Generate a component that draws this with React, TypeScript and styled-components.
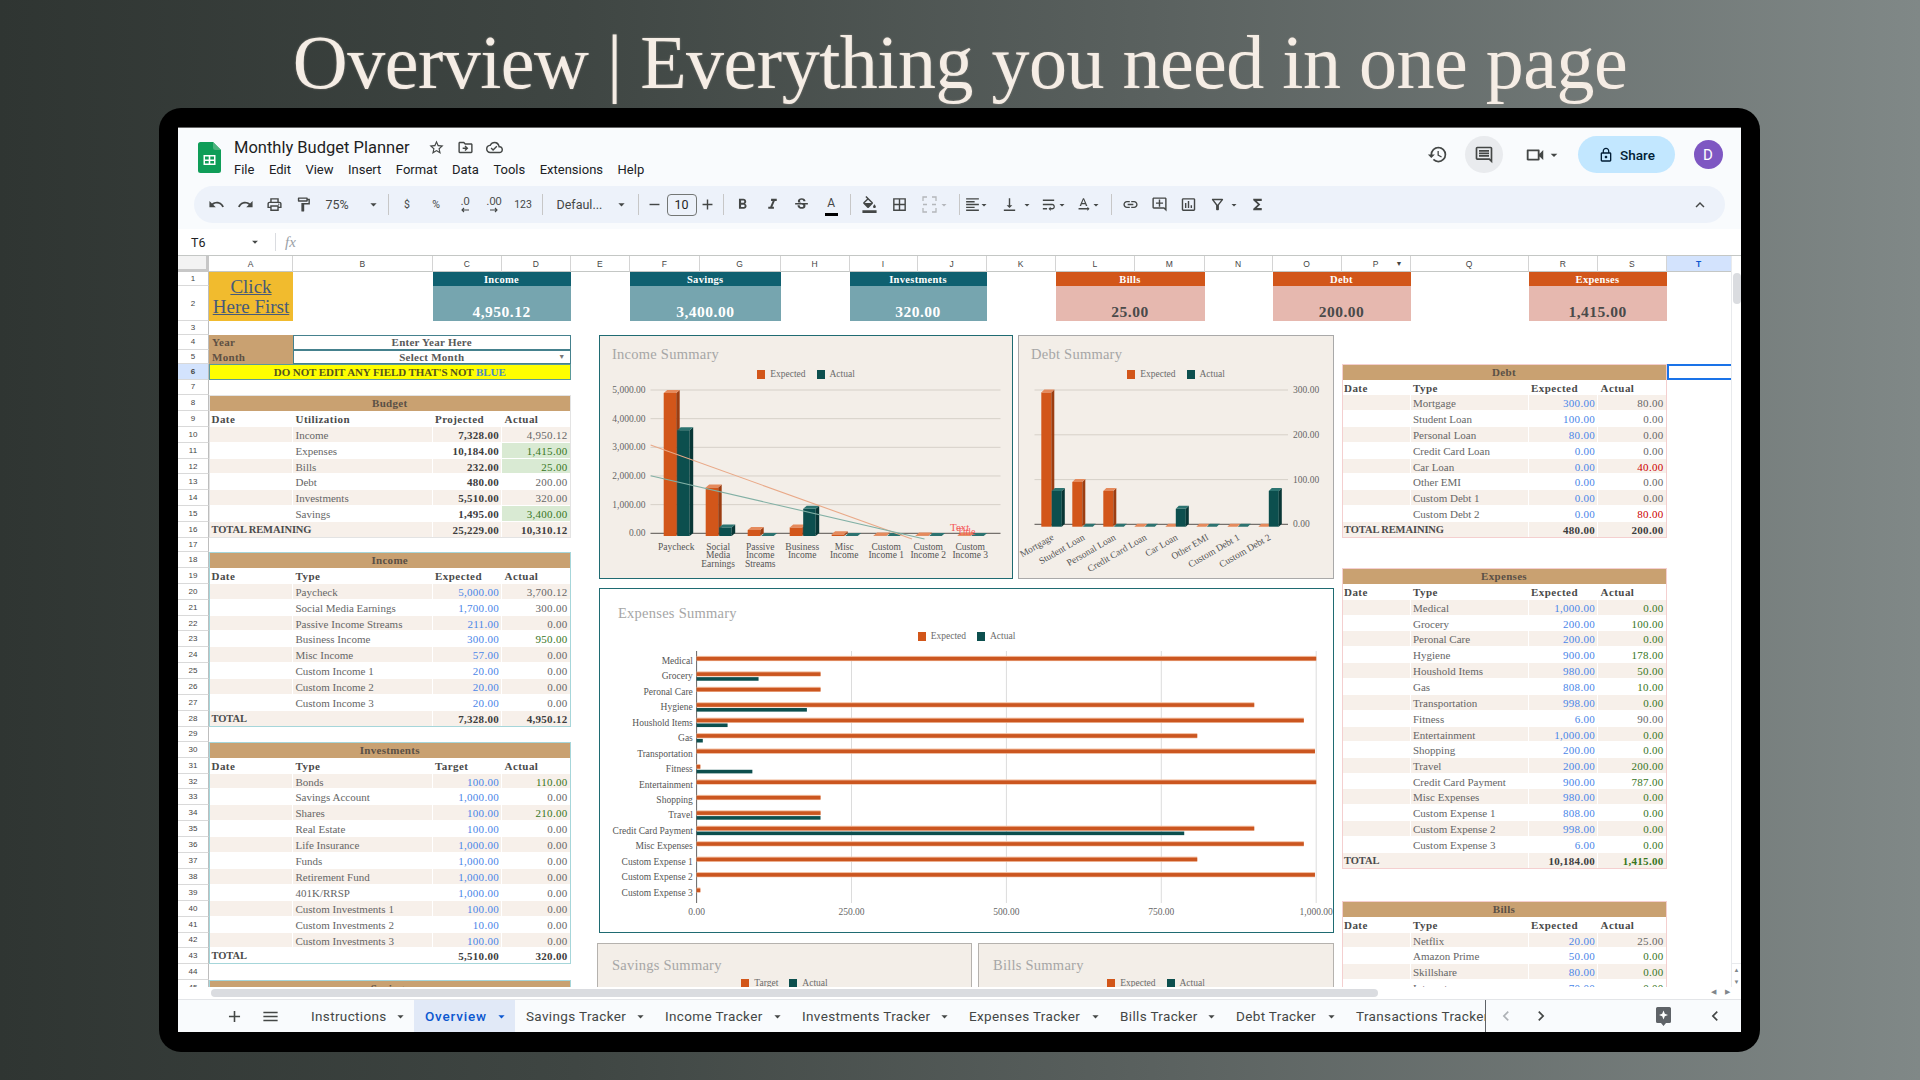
import React from "react";
import styled, { createGlobalStyle } from "styled-components";
import {
  MdUndo, MdRedo, MdOutlinePrint, MdOutlineFormatPaint, MdStarBorder, MdOutlineDriveFileMove,
  MdOutlineCloudDone, MdHistory, MdOutlineComment, MdOutlineVideocam, MdLockOutline, MdArrowDropDown,
  MdRemove, MdAdd, MdFormatBold, MdFormatItalic, MdStrikethroughS, MdFormatColorFill, MdBorderAll,
  MdFormatAlignLeft, MdVerticalAlignBottom, MdWrapText, MdTextRotationNone, MdLink, MdOutlineAddComment,
  MdInsertChartOutlined, MdOutlineFilterAlt, MdFunctions, MdExpandLess, MdMenu, MdChevronLeft, MdChevronRight,
} from "react-icons/md";

const SERIF = `"Liberation Serif", serif`;
const UI = `Roboto, "Liberation Sans", sans-serif`;
const ARIAL = `"Liberation Sans", sans-serif`;

const ORANGE = "#d2561a";
const TEAL = "#0c4f4e";

const colWidths = [84, 139.5, 69.5, 68.5, 59.5, 69.5, 81, 69, 68, 69, 69, 79.5, 69.5, 68, 69, 69, 118, 69.5, 68.5, 65];
const colNames = "ABCDEFGHIJKLMNOPQRST".split("");
const rowHeights = [
  14, 35, 14, 14.5, 14.5, 15.5, 15.5,
  ...Array(9).fill(15.9), 14,
  ...Array(11).fill(15.9), 15,
  ...Array(14).fill(15.9), 16,
  ...Array(3).fill(15.9),
];

const GlobalStyle = createGlobalStyle`
  html, body { margin: 0; padding: 0; }
  body { width: 1920px; height: 1080px; overflow: hidden; font-family: ${UI}; }
  * { box-sizing: border-box; }
`;

const Page = styled.div`
  width: 1920px;
  height: 1080px;
  display: flex;
  flex-direction: column;
  align-items: center;
  background: linear-gradient(90deg, #2f3532 0%, #3f4643 30%, #5a615f 60%, #808887 100%);
`;

const Headline = styled.h1`
  height: 108px;
  margin: 0;
  padding-top: 20px;
  font-family: ${SERIF};
  font-weight: 400;
  font-size: 76px;
  line-height: 84px;
  letter-spacing: -0.5px;
  color: #f5ede5;
  text-shadow: 0 0 2px #8d8983;
  white-space: nowrap;
`;

const Frame = styled.div`
  width: 1601px;
  height: 944px;
  margin-right: 1px;
  padding: 19px 19px 20px;
  background: #000;
  border-radius: 22px;
`;

const Screen = styled.div`
  width: 1563px;
  height: 905px;
  display: flex;
  flex-direction: column;
  background: #f9fbfd;
  overflow: hidden;
`;

const TopBar = styled.header`
  height: 59px;
  flex: none;
  display: flex;
  align-items: center;
  padding: 0 18.5px 0 20px;
  border-top: 1px solid #666;
`;

const TitleBlock = styled.div`
  margin-left: 13px;
  display: flex;
  flex-direction: column;
  gap: 3px;
  margin-top: -1px;
`;

const TitleRow = styled.div`
  display: flex;
  align-items: center;
  height: 22px;
`;

const DocTitle = styled.div`
  font-size: 16.5px;
  color: #1f1f1f;
  width: 174px;
  white-space: nowrap;
`;

const TitleIcons = styled.div`
  display: flex;
  margin-left: 14px;
`;

const TitleIcon = styled.span`
  width: 29px;
  display: flex;
  justify-content: center;
  color: #444746;
  font-size: 17px;
`;

const MenuRow = styled.nav`
  display: flex;
  gap: 14.5px;
  font-size: 13px;
  color: #202124;
`;

const TopActions = styled.div`
  margin-left: auto;
  margin-top: -5px;
  display: flex;
  align-items: center;
`;

const CommentPill = styled.div`
  width: 38px;
  height: 37px;
  margin-left: 17px;
  border-radius: 19px;
  background: #e9ebee;
  display: flex;
  align-items: center;
  justify-content: center;
  font-size: 20px;
  color: #444746;
`;

const VideoButton = styled.div`
  margin-left: 21.5px;
  display: flex;
  align-items: center;
  font-size: 22px;
  color: #444746;
`;

const ShareButton = styled.div`
  width: 97px;
  height: 37px;
  margin-left: 16px;
  border-radius: 19px;
  background: #c2e7ff;
  display: flex;
  align-items: center;
  justify-content: center;
  gap: 6px;
  font-size: 13.5px;
  font-weight: 500;
  color: #001d35;
`;

const Avatar = styled.div`
  width: 29px;
  height: 29px;
  margin-left: 18.5px;
  border-radius: 50%;
  background: #7e57c2;
  color: #fff;
  font-size: 15px;
  display: flex;
  align-items: center;
  justify-content: center;
`;

const Toolbar = styled.div`
  height: 37px;
  flex: none;
  margin: 0 16px 0 15.5px;
  padding: 0 16px 0 8px;
  border-radius: 19px;
  background: #edf2fa;
  display: flex;
  align-items: center;
  color: #444746;
`;

const ToolButton = styled.span<{ $w?: number; $muted?: boolean }>`
  width: ${(p) => p.$w ?? 29}px;
  height: 26px;
  flex: none;
  display: flex;
  align-items: center;
  justify-content: center;
  font-size: 17px;
  color: ${(p) => (p.$muted ? "#b4b7bb" : "#444746")};
  position: relative;
`;

const ToolCaret = styled.span`
  width: 12px;
  flex: none;
  margin-left: -4px;
  margin-right: 4.5px;
  display: flex;
  justify-content: center;
  font-size: 14px;
  color: #444746;
`;

const ToolSep = styled.span`
  width: 1px;
  height: 21px;
  flex: none;
  margin: 0 4px;
  background: #c7c7c7;
`;

const ToolSelect = styled.span<{ $w: number; $pad: number; $caretGap: number }>`
  width: ${(p) => p.$w}px;
  padding-left: ${(p) => p.$pad}px;
  flex: none;
  display: flex;
  align-items: center;
  justify-content: space-between;
  font-size: 12.5px;
  color: #444746;
  svg { font-size: 15px; margin-right: ${(p) => p.$caretGap}px; }
`;

const NumberText = styled.span`
  font-size: 10.5px;
  color: #444746;
`;

const SizeBox = styled.span`
  width: 30px;
  height: 22px;
  flex: none;
  border: 1px solid #747775;
  border-radius: 4px;
  font-size: 12.5px;
  display: flex;
  align-items: center;
  justify-content: center;
  color: #1f1f1f;
`;

const ColorBar = styled.span<{ $c: string }>`
  position: absolute;
  left: 8px;
  right: 8px;
  bottom: 2px;
  height: 3px;
  background: ${(p) => p.$c};
`;

const LetterA = styled.span`
  font-size: 12px;
  margin-bottom: 4px;
  color: #444746;
`;

const Collapse = styled.span`
  margin-left: auto;
  font-size: 18px;
  display: flex;
  color: #444746;
`;

const FormulaBar = styled.div`
  height: 33px;
  margin-top: 0;
  padding: 6px 0 0 13px;
  flex: none;
  display: flex;
  align-items: center;
  background: linear-gradient(#f9fbfd 6px, #fff 6px);
  border-bottom: 1px solid #c4c7c5;
  font-size: 12.5px;
  color: #202124;
`;

const CellName = styled.span`
  width: 71px;
  display: flex;
  justify-content: space-between;
  align-items: center;
  svg { font-size: 14px; color: #444746; }
`;

const FxSep = styled.span`
  width: 1px;
  height: 18px;
  margin: 0 9px 0 13px;
  background: #dadce0;
`;

const FxMark = styled.span`
  font-family: ${SERIF};
  font-style: italic;
  font-size: 15px;
  color: #9aa0a6;
`;

const SheetRow = styled.div`
  display: flex;
  flex: none;
  height: 731px;
  background: #fff;
`;

const Sheet = styled.div`
  position: relative;
  width: 1553px;
  height: 731px;
  overflow: hidden;
  display: grid;
  grid-template-columns: 31px ${colWidths.map((w) => `${w}px`).join(" ")};
  grid-template-rows: 16px ${rowHeights.map((h) => `${h}px`).join(" ")};
  background: #fff;
  font-family: ${SERIF};
  font-size: 11px;
  color: #666;
`;

const Corner = styled.div`
  grid-column: 1;
  grid-row: 1;
  background: #f3f3f3;
  border-right: 3px solid #c7c7c7;
  border-bottom: 3px solid #c7c7c7;
`;

const ColumnStrip = styled.div`
  grid-column: 2 / span 20;
  grid-row: 1;
  display: grid;
  grid-template-columns: subgrid;
`;

const ColumnHead = styled.div<{ $active?: boolean }>`
  position: relative;
  display: flex;
  align-items: center;
  justify-content: center;
  font-family: ${ARIAL};
  font-size: 8.5px;
  font-weight: ${(p) => (p.$active ? 700 : 400)};
  color: ${(p) => (p.$active ? "#0b57d0" : "#444")};
  background: ${(p) => (p.$active ? "#d3e3fd" : "#fff")};
  border-right: 1px solid #d4d4d4;
  border-bottom: 1px solid #c4c7c5;
`;

const FilterCaret = styled.span`
  position: absolute;
  right: 7px;
  font-size: 7px;
  color: #444;
`;

const RowStrip = styled.div`
  grid-column: 1;
  grid-row: 2 / span 49;
  display: grid;
  grid-template-rows: subgrid;
`;

const RowHead = styled.div<{ $active?: boolean }>`
  display: flex;
  align-items: center;
  justify-content: center;
  font-family: ${ARIAL};
  font-size: 8px;
  font-weight: ${(p) => (p.$active ? 700 : 400)};
  color: #444;
  background: ${(p) => (p.$active ? "#d3e3fd" : "#fff")};
  border-right: 1px solid #bdbdbd;
  border-bottom: 1px solid #d9d9d9;
`;

const ClickCell = styled.a`
  grid-column: 2;
  grid-row: 2 / span 2;
  background: #f1bb2e;
  color: #455a7a;
  font-size: 19px;
  line-height: 20px;
  text-align: center;
  text-decoration: underline;
  padding-top: 5px;
`;

const KpiCard = styled.div<{ $col: number; $tone: "teal" | "orange" }>`
  grid-column: ${(p) => p.$col} / span 2;
  grid-row: 2 / span 2;
  display: grid;
  grid-template-rows: 14px 35px;
  background: ${(p) => (p.$tone === "teal" ? "#76a5af" : "#e6b8af")};
  text-align: center;
  font-weight: 700;
`;

const KpiHead = styled.div<{ $tone: "teal" | "orange" }>`
  background: ${(p) => (p.$tone === "teal" ? "#0f6070" : ORANGE)};
  color: #fff;
  font-size: 10.5px;
  letter-spacing: 0.3px;
  line-height: 15px;
`;

const KpiValue = styled.div<{ $tone: "teal" | "orange" }>`
  color: ${(p) => (p.$tone === "teal" ? "#fff" : "#4a4a4a")};
  font-size: 15.5px;
  letter-spacing: 0.5px;
  align-self: end;
  line-height: 19px;
`;

const FieldLabel = styled.div<{ $row: number }>`
  grid-column: 2;
  grid-row: ${(p) => p.$row};
  background: #c9a171;
  color: #5d5043;
  font-weight: 700;
  letter-spacing: 0.3px;
  padding-left: 3px;
  line-height: 14px;
`;

const FieldValue = styled.div<{ $row: number }>`
  position: relative;
  grid-column: 3 / span 3;
  grid-row: ${(p) => p.$row};
  border: 1px solid #45818e;
  color: #595959;
  font-weight: 700;
  letter-spacing: 0.25px;
  text-align: center;
  line-height: 13px;
`;

const FieldCaret = styled.span`
  position: absolute;
  right: 4px;
  top: 0;
  font-size: 7px;
  color: #777;
`;

const Warning = styled.div`
  grid-column: 2 / span 4;
  grid-row: 7;
  background: #ffff00;
  border: 1px solid #5b9a9a;
  color: #55551f;
  font-weight: 700;
  letter-spacing: -0.1px;
  text-align: center;
  line-height: 14px;
`;

const WarningBlue = styled.span`
  color: #4a8bc0;
`;

const SelectedCell = styled.div`
  grid-column: 21;
  grid-row: 7;
  border: 2px solid #1a73e8;
  border-right: none;
`;

const TableBlock = styled.section<{ $col: number; $row: number; $rows: number; $edge: string }>`
  grid-column: ${(p) => p.$col} / span 4;
  grid-row: ${(p) => p.$row + 1} / span ${(p) => p.$rows};
  display: grid;
  grid-template-columns: subgrid;
  grid-template-rows: subgrid;
  outline: 1px solid ${(p) => p.$edge};
  outline-offset: -1px;
`;

const TableTitle = styled.div`
  grid-column: 1 / span 4;
  background: #c9a171;
  color: #5a5046;
  font-weight: 700;
  font-size: 11px;
  letter-spacing: 0.3px;
  text-align: center;
  line-height: 16.5px;
`;

const ColumnLabel = styled.div`
  color: #4a4a4a;
  font-weight: 700;
  letter-spacing: 0.45px;
  padding-left: 2.5px;
  line-height: 16.5px;
  white-space: nowrap;
`;

type Tone = "plain" | "strong" | "blue" | "green" | "red";
const toneColor: Record<Tone, string> = {
  plain: "#666666",
  strong: "#3d3d3d",
  blue: "#4a86e8",
  green: "#38761d",
  red: "#cc0000",
};

const Cell = styled.div<{ $striped?: boolean; $span?: number; $flag?: boolean }>`
  grid-column: span ${(p) => p.$span ?? 1};
  background: ${(p) => (p.$flag ? "#d9ead3" : p.$striped ? "#f7f0ea" : "transparent")};
  border-bottom: 1px solid #fff;
  border-right: 1px solid #fff;
  white-space: nowrap;
  line-height: 16px;
`;

const TextCell = styled(Cell)<{ $bold?: boolean }>`
  padding-left: 2.5px;
  font-size: ${(p) => (p.$bold ? 10.5 : 11)}px;
  letter-spacing: ${(p) => (p.$bold ? -0.1 : 0)}px;
  font-weight: ${(p) => (p.$bold ? 700 : 400)};
  color: ${(p) => (p.$bold ? "#4a4a4a" : "#666")};
`;

const NumCell = styled(Cell)<{ $tone: Tone; $bold?: boolean }>`
  padding-right: 2px;
  text-align: right;
  letter-spacing: 0.28px;
  font-weight: ${(p) => (p.$bold ? 700 : 400)};
  color: ${(p) => toneColor[p.$tone]};
`;

const ChartCard = styled.div<{ $x: number; $y: number; $w: number; $h: number; $edge: string; $fill: string }>`
  position: absolute;
  left: ${(p) => p.$x - 178}px;
  top: ${(p) => p.$y - 256}px;
  width: ${(p) => p.$w}px;
  height: ${(p) => p.$h}px;
  border: 1px solid ${(p) => p.$edge};
  background: ${(p) => p.$fill};
`;

const ChartTitle = styled.div<{ $left: number; $top: number }>`
  position: absolute;
  left: ${(p) => p.$left}px;
  top: ${(p) => p.$top}px;
  font-size: 14.5px;
  line-height: 18px;
  letter-spacing: 0.25px;
  color: #a6a6a6;
  white-space: nowrap;
`;

const Legend = styled.div<{ $top: number }>`
  position: absolute;
  left: 0;
  right: 0;
  top: ${(p) => p.$top}px;
  display: flex;
  justify-content: center;
  align-items: center;
  font-size: 9.5px;
  color: #6b6b6b;
  line-height: 10px;
`;

const LegendSwatch = styled.span<{ $c: string }>`
  width: 8px;
  height: 9px;
  margin-right: 5px;
  background: ${(p) => p.$c};
`;

const LegendLabel = styled.span`
  margin-right: 11px;
  &:last-child { margin-right: 0; }
`;

const ChartCanvas = styled.svg`
  position: absolute;
  left: -1px;
  top: -1px;
  overflow: visible;
`;

const AxisText = styled.text<{ $c?: string; $s?: number }>`
  font-family: ${SERIF};
  font-size: ${(p) => p.$s ?? 9.5}px;
  fill: ${(p) => p.$c ?? "#666"};
`;

const VerticalScroll = styled.div`
  width: 10px;
  height: 731px;
  position: relative;
  background: #fff;
  border-left: 1px solid #e8eaed;
`;

const VerticalThumb = styled.div`
  height: 31px;
  margin: 17px 0 0 1px;
  width: 8px;
  border-radius: 4px;
  background: #dadce0;
`;

const ScrollArrows = styled.div`
  position: absolute;
  bottom: 0;
  left: 0;
  right: 0;
  height: 24px;
  border-top: 1px solid #e8eaed;
  display: flex;
  flex-direction: column;
  align-items: center;
  justify-content: space-around;
  font-size: 6px;
  color: #80868b;
`;

const HorizontalScroll = styled.div`
  height: 12px;
  flex: none;
  padding: 2px 0 0 33px;
  display: flex;
  background: #fff;
  position: relative;
`;

const HorizontalThumb = styled.div`
  width: 1167px;
  height: 8px;
  border-radius: 4px;
  background: #dadce0;
`;

const ScrollEnds = styled.div`
  position: absolute;
  right: 11px;
  top: 1px;
  display: flex;
  gap: 9px;
  font-size: 7px;
  color: #80868b;
`;

const TabBar = styled.footer`
  height: 33px;
  flex: none;
  display: flex;
  align-items: center;
  border-top: 1px solid #e3e5e8;
  background: #f9fbfd;
  padding-left: 41px;
  color: #444746;
`;

const TabTool = styled.span`
  width: 30px;
  margin-right: 6px;
  display: flex;
  justify-content: center;
  font-size: 19px;
`;

const Tabs = styled.div`
  margin-left: 9px;
  width: 1186px;
  height: 100%;
  display: flex;
  overflow: hidden;
  border-right: 1px solid #5f6368;
`;

const Tab = styled.div<{ $active?: boolean; $w: number }>`
  flex: none;
  width: ${(p) => p.$w}px;
  padding: 0 6.5px 0 11px;
  display: flex;
  align-items: center;
  justify-content: space-between;
  font-size: 13.5px;
  letter-spacing: ${(p) => (p.$active ? 0.8 : 0.35)}px;
  font-weight: ${(p) => (p.$active ? 500 : 400)};
  color: ${(p) => (p.$active ? "#0b57d0" : "#444746")};
  background: ${(p) => (p.$active ? "#e1e9f7" : "transparent")};
  white-space: nowrap;
  svg { font-size: 15px; flex: none; }
`;

const TabNav = styled.span<{ $dim?: boolean; $gap: number }>`
  margin-left: ${(p) => p.$gap}px;
  display: flex;
  font-size: 20px;
  color: ${(p) => (p.$dim ? "#aeb2b6" : "#444746")};
`;

const SheetsLogo = () => (
  <svg width="23" height="31" viewBox="0 0 23 31">
    <path d="M2.5 0H15l8 8v20.5a2.5 2.5 0 0 1-2.5 2.5h-18A2.5 2.5 0 0 1 0 28.5v-26A2.5 2.5 0 0 1 2.5 0z" fill="#0f9d58" />
    <path d="M15 0l8 8h-5.5A2.5 2.5 0 0 1 15 5.500z" fill="#4db37e" />
    <path d="M5.500 13h12v10h-12z M7 14.500v3h3.700v-3z M12.300 14.500v3H16v-3z M7 19v2.500h3.700V19z M12.300 19v2.500H16V19z" fill="#fff" fillRule="evenodd" />
  </svg>
);

const MergeIcon = () => (
  <svg width="15" height="17" viewBox="0 0 15 17" fill="none" stroke="#b4b7bb" strokeWidth="1.3">
    <path d="M1 5V1h4M10 1h4v4M1 12v4h4M10 16h4v-4M1 8.500h4M14 8.500h-4" />
  </svg>
);

const ExploreIcon = () => (
  <svg width="15" height="19" viewBox="0 0 15 19">
    <path d="M1.500 0h12A1.500 1.500 0 0 1 15 1.500v13a1.500 1.500 0 0 1-1.500 1.500H10l-2.500 3L5 16H1.500A1.500 1.500 0 0 1 0 14.500v-13A1.500 1.500 0 0 1 1.500 0z" fill="#5f6368" />
    <path d="M7.500 3.500l1.300 3.200 3.200 1.300-3.200 1.300-1.300 3.200-1.300-3.200L3 8l3.200-1.300z" fill="#fff" />
  </svg>
);

const DecimalIcon = ({ label, flip }: { label: string; flip?: boolean }) => (
  <svg width="20" height="20" viewBox="0 0 20 20" fill="none" stroke="#444746" strokeWidth="1.1">
    <text x="10" y="10" textAnchor="middle" fontSize="11" fill="#444746" stroke="none" fontFamily={ARIAL}>{label}</text>
    {flip ? <path d="M6 15h7M11 13l2 2-2 2" /> : <path d="M14 15H7M9 13l-2 2 2 2" />}
  </svg>
);

type BarStyle = { front: string; side: string; top: string };
const orangeBar: BarStyle = { front: ORANGE, side: "#9c3d11", top: "#e58a5c" };
const tealBar: BarStyle = { front: TEAL, side: "#083635", top: "#2c7370" };

const Bar3D = ({ x, w, bottom, h, dx, dy, colors }: { x: number; w: number; bottom: number; h: number; dx: number; dy: number; colors: BarStyle }) => {
  const y = bottom - h;
  return (
    <g>
      <rect x={x} y={y} width={w} height={h} fill={colors.front} />
      <polygon points={`${x + w},${y} ${x + w + dx},${y - dy} ${x + w + dx},${bottom - dy} ${x + w},${bottom}`} fill={colors.side} />
      <polygon points={`${x},${y} ${x + dx},${y - dy} ${x + w + dx},${y - dy} ${x + w},${y}`} fill={colors.top} />
    </g>
  );
};

const ChartLegend = ({ top, first = "Expected" }: { top: number; first?: string }) => (
  <Legend $top={top}>
    <LegendSwatch $c={ORANGE} />
    <LegendLabel>{first}</LegendLabel>
    <LegendSwatch $c={TEAL} />
    <LegendLabel>Actual</LegendLabel>
  </Legend>
);

const incomeGroups: { lines: string[]; exp: number; act: number }[] = [
  { lines: ["Paycheck"], exp: 5000, act: 3700 },
  { lines: ["Social", "Media", "Earnings"], exp: 1700, act: 300 },
  { lines: ["Passive", "Income", "Streams"], exp: 211, act: 0 },
  { lines: ["Business", "Income"], exp: 300, act: 950 },
  { lines: ["Misc", "Income"], exp: 57, act: 0 },
  { lines: ["Custom", "Income 1"], exp: 20, act: 0 },
  { lines: ["Custom", "Income 2"], exp: 20, act: 0 },
  { lines: ["Custom", "Income 3"], exp: 20, act: 0 },
];

const IncomeChart = () => (
  <ChartCard $x={599} $y={335} $w={414} $h={244} $edge="#1f6b72" $fill="#f3eee8">
    <ChartTitle $left={12} $top={9}>Income Summary</ChartTitle>
    <ChartLegend top={33} />
    <ChartCanvas width={414} height={244}>
      <g transform="translate(-599,-335)">
        {[5000, 4000, 3000, 2000, 1000].map((v, i) => (
          <g key={v}>
            <line x1={650.5} x2={1000.5} y1={390 + i * 28.66} y2={390 + i * 28.66} stroke="#d6d0c8" />
            <AxisText x={645.5} y={393 + i * 28.66} textAnchor="end">{v.toLocaleString("en-US")}.00</AxisText>
          </g>
        ))}
        <line x1={650.5} x2={1000.5} y1={533.3} y2={533.3} stroke="#55524e" />
        <AxisText x={645.5} y={536.300} textAnchor="end">0.00</AxisText>
        {incomeGroups.map((g, i) => {
          const x = 663.7 + i * 42;
          return (
            <g key={i}>
              <Bar3D x={x} w={12.5} bottom={536} h={g.exp * 0.0286} dx={3.5} dy={3} colors={orangeBar} />
              <Bar3D x={x + 13.5} w={12.5} bottom={536} h={g.act * 0.0286} dx={3.5} dy={3} colors={tealBar} />
              {g.lines.map((l, k) => (
                <AxisText key={l} x={x + 12.5} y={550 + k * 8.3} textAnchor="middle" $c="#555">{l}</AxisText>
              ))}
            </g>
          );
        })}
        <line x1={650.6} y1={445} x2={912} y2={539} stroke="#e9a988" strokeWidth={1.1} />
        <line x1={650.6} y1={475.7} x2={924.5} y2={539} stroke="#82b0a5" strokeWidth={1.1} />
        <AxisText x={950} y={531} $c="#f55a5a" $s={11}>Text</AxisText>
        <AxisText x={957} y={535} $c="#f55a5a" $s={10}>Title</AxisText>
      </g>
    </ChartCanvas>
  </ChartCard>
);

const debtGroups = [
  { name: "Mortgage", exp: 300, act: 80 },
  { name: "Student Loan", exp: 100, act: 0 },
  { name: "Personal Loan", exp: 80, act: 0 },
  { name: "Credit Card Loan", exp: 0, act: 0 },
  { name: "Car Loan", exp: 0, act: 40 },
  { name: "Other EMI", exp: 0, act: 0 },
  { name: "Custom Debt 1", exp: 0, act: 0 },
  { name: "Custom Debt 2", exp: 0, act: 80 },
];

const DebtChart = () => (
  <ChartCard $x={1018} $y={335} $w={316} $h={244} $edge="#a9a9a9" $fill="#f3eee8">
    <ChartTitle $left={12} $top={9}>Debt Summary</ChartTitle>
    <ChartLegend top={33} />
    <ChartCanvas width={316} height={244}>
      <g transform="translate(-1018,-335)">
        {[300, 200, 100].map((v, i) => (
          <g key={v}>
            <line x1={1034.5} x2={1288} y1={390 + i * 44.8} y2={390 + i * 44.8} stroke="#d6d0c8" />
            <AxisText x={1293} y={393 + i * 44.8}>{v}.00</AxisText>
          </g>
        ))}
        <line x1={1034.5} x2={1288} y1={524.3} y2={524.3} stroke="#55524e" />
        <AxisText x={1293} y={527.300}>0.00</AxisText>
        {debtGroups.map((g, i) => {
          const x = 1041.3 + i * 31;
          return (
            <g key={g.name}>
              <Bar3D x={x} w={10} bottom={526.7} h={g.exp * 0.4477} dx={3} dy={3} colors={orangeBar} />
              <Bar3D x={x + 10.5} w={10} bottom={526.7} h={g.act * 0.4477} dx={3} dy={3} colors={tealBar} />
              <AxisText x={x + 13} y={539} textAnchor="end" $c="#555" transform={`rotate(-30 ${x + 13} 539)`}>{g.name}</AxisText>
            </g>
          );
        })}
      </g>
    </ChartCanvas>
  </ChartCard>
);

const expenseBars: [string, number, number][] = [
  ["Medical", 1000, 0], ["Grocery", 200, 100], ["Peronal Care", 200, 0], ["Hygiene", 900, 178],
  ["Houshold Items", 980, 50], ["Gas", 808, 10], ["Transportation", 998, 0], ["Fitness", 6, 90],
  ["Entertainment", 1000, 0], ["Shopping", 200, 0], ["Travel", 200, 200], ["Credit Card Payment", 900, 787],
  ["Misc Expenses", 980, 0], ["Custom Expense 1", 808, 0], ["Custom Expense 2", 998, 0], ["Custom Expense 3", 6, 0],
];

const ExpensesChart = () => (
  <ChartCard $x={599} $y={588} $w={735} $h={345} $edge="#1f6b72" $fill="#ffffff">
    <ChartTitle $left={18} $top={15}>Expenses Summary</ChartTitle>
    <ChartLegend top={42} />
    <ChartCanvas width={735} height={345}>
      <g transform="translate(-599,-588)">
        {[0, 250, 500, 750, 1000].map((v) => {
          const x = 696.6 + v * 0.6196;
          return (
            <g key={v}>
              <line x1={x} x2={x} y1={651} y2={903} stroke={v === 0 ? "#666" : "#dcdcdc"} />
              <AxisText x={x} y={914.5} textAnchor="middle">{v.toLocaleString("en-US")}.00</AxisText>
            </g>
          );
        })}
        {expenseBars.map(([name, exp, act], i) => {
          const y = 658.7 + i * 15.44;
          return (
            <g key={name}>
              <AxisText x={692.8} y={y + 5.3} textAnchor="end" $c="#555">{name}</AxisText>
              <rect x={696.6} y={y - 2.8} width={exp * 0.6196} height={5.2} fill="#f2bd9f" />
              <rect x={696.6} y={y - 1.8} width={exp * 0.6196} height={3.6} fill="#cb5620" />
              {act > 0 && <rect x={696.6} y={y + 3} width={act * 0.6196} height={3.6} fill={TEAL} />}
            </g>
          );
        })}
      </g>
    </ChartCanvas>
  </ChartCard>
);

const MiniChart = ({ x, w, title, first, titleLeft }: { x: number; w: number; title: string; first: string; titleLeft: number }) => (
  <ChartCard $x={x} $y={943} $w={w} $h={120} $edge="#b5b2ae" $fill="#f3eee8">
    <ChartTitle $left={titleLeft} $top={12}>{title}</ChartTitle>
    <ChartLegend top={34} first={first} />
  </ChartCard>
);

type Row = { label: string; a: string; b: string; aTone?: Tone; bTone?: Tone; flag?: boolean; aBold?: boolean };

const TableView = ({
  col, row, title, edge, heads, rows, total, stripeTotal = true, totalBTone = "strong", span = 2,
}: {
  col: number; row: number; title: string; edge: string; heads: string[]; rows: Row[];
  total?: { label: string; a: string; b: string }; stripeTotal?: boolean; totalBTone?: Tone; span?: number;
}) => (
  <TableBlock $col={col} $row={row} $rows={rows.length + (total ? 3 : 2)} $edge={edge}>
    <TableTitle>{title}</TableTitle>
    {["Date", ...heads].map((h, i) => (
      <ColumnLabel key={h + i}>{h}</ColumnLabel>
    ))}
    {rows.map((r, i) => {
      const striped = i % 2 === 0;
      return (
        <React.Fragment key={r.label}>
          <TextCell $striped={striped} />
          <TextCell $striped={striped}>{r.label}</TextCell>
          <NumCell $striped={striped} $tone={r.aTone ?? "blue"} $bold={r.aBold}>{r.a}</NumCell>
          <NumCell $striped={striped} $flag={r.flag} $tone={r.bTone ?? "plain"}>{r.b}</NumCell>
        </React.Fragment>
      );
    })}
    {total && (
      <>
        <TextCell $striped={stripeTotal} $span={span} $bold>{total.label}</TextCell>
        <NumCell $striped={stripeTotal} $tone="strong" $bold>{total.a}</NumCell>
        <NumCell $striped={stripeTotal} $tone={totalBTone} $bold>{total.b}</NumCell>
      </>
    )}
  </TableBlock>
);

const budgetRows: Row[] = [
  { label: "Income", a: "7,328.00", b: "4,950.12", aTone: "strong", aBold: true },
  { label: "Expenses", a: "10,184.00", b: "1,415.00", aTone: "strong", aBold: true, bTone: "green", flag: true },
  { label: "Bills", a: "232.00", b: "25.00", aTone: "strong", aBold: true, bTone: "green", flag: true },
  { label: "Debt", a: "480.00", b: "200.00", aTone: "strong", aBold: true },
  { label: "Investments", a: "5,510.00", b: "320.00", aTone: "strong", aBold: true },
  { label: "Savings", a: "1,495.00", b: "3,400.00", aTone: "strong", aBold: true, bTone: "green", flag: true },
];

const incomeRows: Row[] = [
  { label: "Paycheck", a: "5,000.00", b: "3,700.12" },
  { label: "Social Media Earnings", a: "1,700.00", b: "300.00" },
  { label: "Passive Income Streams", a: "211.00", b: "0.00" },
  { label: "Business Income", a: "300.00", b: "950.00", bTone: "green" },
  { label: "Misc Income", a: "57.00", b: "0.00" },
  { label: "Custom Income 1", a: "20.00", b: "0.00" },
  { label: "Custom Income 2", a: "20.00", b: "0.00" },
  { label: "Custom Income 3", a: "20.00", b: "0.00" },
];

const investmentRows: Row[] = [
  { label: "Bonds", a: "100.00", b: "110.00", bTone: "green" },
  { label: "Savings Account", a: "1,000.00", b: "0.00" },
  { label: "Shares", a: "100.00", b: "210.00", bTone: "green" },
  { label: "Real Estate", a: "100.00", b: "0.00" },
  { label: "Life Insurance", a: "1,000.00", b: "0.00" },
  { label: "Funds", a: "1,000.00", b: "0.00" },
  { label: "Retirement Fund", a: "1,000.00", b: "0.00" },
  { label: "401K/RRSP", a: "1,000.00", b: "0.00" },
  { label: "Custom Investments 1", a: "100.00", b: "0.00" },
  { label: "Custom Investments 2", a: "10.00", b: "0.00" },
  { label: "Custom Investments 3", a: "100.00", b: "0.00" },
];

const debtRows: Row[] = [
  { label: "Mortgage", a: "300.00", b: "80.00" },
  { label: "Student Loan", a: "100.00", b: "0.00" },
  { label: "Personal Loan", a: "80.00", b: "0.00" },
  { label: "Credit Card Loan", a: "0.00", b: "0.00" },
  { label: "Car Loan", a: "0.00", b: "40.00", bTone: "red" },
  { label: "Other EMI", a: "0.00", b: "0.00" },
  { label: "Custom Debt 1", a: "0.00", b: "0.00" },
  { label: "Custom Debt 2", a: "0.00", b: "80.00", bTone: "red" },
];

const expenseRows: Row[] = expenseBars.map(([label, a, b]) => ({
  label,
  a: `${a.toLocaleString("en-US")}.00`,
  b: `${b}.00`,
  bTone: label === "Fitness" ? "plain" : "green",
}));

const billRows: Row[] = [
  { label: "Netflix", a: "20.00", b: "25.00" },
  { label: "Amazon Prime", a: "50.00", b: "0.00", bTone: "green" },
  { label: "Skillshare", a: "80.00", b: "0.00", bTone: "green" },
  { label: "Internet", a: "70.00", b: "0.00", bTone: "green" },
];

const kpis: { col: number; tone: "teal" | "orange"; label: string; value: string }[] = [
  { col: 4, tone: "teal", label: "Income", value: "4,950.12" },
  { col: 7, tone: "teal", label: "Savings", value: "3,400.00" },
  { col: 10, tone: "teal", label: "Investments", value: "320.00" },
  { col: 13, tone: "orange", label: "Bills", value: "25.00" },
  { col: 16, tone: "orange", label: "Debt", value: "200.00" },
  { col: 19, tone: "orange", label: "Expenses", value: "1,415.00" },
];

const tabs: [string, number][] = [
  ["Instructions", 114], ["Overview", 101], ["Savings Tracker", 139], ["Income Tracker", 137],
  ["Investments Tracker", 167], ["Expenses Tracker", 151], ["Bills Tracker", 116], ["Debt Tracker", 120],
  ["Transactions Tracker", 142],
];
const TEAL_EDGE = "#a6d6da";
const PINK_EDGE = "#f4cfcf";

export default function App() {
  return (
    <Page>
      <GlobalStyle />
      <Headline>Overview | Everything you need in one page</Headline>
      <Frame>
        <Screen>
          <TopBar>
            <SheetsLogo />
            <TitleBlock>
              <TitleRow>
                <DocTitle>Monthly Budget Planner</DocTitle>
                <TitleIcons>
                  <TitleIcon><MdStarBorder /></TitleIcon>
                  <TitleIcon><MdOutlineDriveFileMove /></TitleIcon>
                  <TitleIcon><MdOutlineCloudDone /></TitleIcon>
                </TitleIcons>
              </TitleRow>
              <MenuRow>
                {["File", "Edit", "View", "Insert", "Format", "Data", "Tools", "Extensions", "Help"].map((m) => (
                  <span key={m}>{m}</span>
                ))}
              </MenuRow>
            </TitleBlock>
            <TopActions>
              <MdHistory size={21} color="#444746" />
              <CommentPill><MdOutlineComment /></CommentPill>
              <VideoButton><MdOutlineVideocam /><MdArrowDropDown size={16} /></VideoButton>
              <ShareButton><MdLockOutline size={16} />Share</ShareButton>
              <Avatar>D</Avatar>
            </TopActions>
          </TopBar>
          <Toolbar>
            <ToolButton><MdUndo /></ToolButton>
            <ToolButton><MdRedo /></ToolButton>
            <ToolButton><MdOutlinePrint /></ToolButton>
            <ToolButton><MdOutlineFormatPaint /></ToolButton>
            <ToolSelect $w={66} $pad={8} $caretGap={3}>75%<MdArrowDropDown /></ToolSelect>
            <ToolSep />
            <ToolButton><NumberText>$</NumberText></ToolButton>
            <ToolButton><NumberText>%</NumberText></ToolButton>
            <ToolButton><DecimalIcon label=".0" /></ToolButton>
            <ToolButton><DecimalIcon label=".00" flip /></ToolButton>
            <ToolButton><NumberText>123</NumberText></ToolButton>
            <ToolSep />
            <ToolSelect $w={87} $pad={10} $caretGap={5}>Defaul...<MdArrowDropDown /></ToolSelect>
            <ToolSep />
            <ToolButton $w={24}><MdRemove /></ToolButton>
            <SizeBox>10</SizeBox>
            <ToolButton $w={22.5}><MdAdd /></ToolButton>
            <ToolSep />
            <ToolButton $w={29.5}><MdFormatBold /></ToolButton>
            <ToolButton $w={29.5}><MdFormatItalic /></ToolButton>
            <ToolButton $w={29.5}><MdStrikethroughS /></ToolButton>
            <ToolButton $w={29.5}><LetterA>A</LetterA><ColorBar $c="#000" /></ToolButton>
            <ToolSep />
            <ToolButton $w={28}><MdFormatColorFill /></ToolButton>
            <ToolButton $w={33}><MdBorderAll /></ToolButton>
            <ToolButton $w={26}><MergeIcon /></ToolButton>
            <ToolCaret><MdArrowDropDown color="#b4b7bb" /></ToolCaret>
            <ToolSep />
            <ToolButton $w={18}><MdFormatAlignLeft /></ToolButton>
            <ToolCaret><MdArrowDropDown /></ToolCaret>
            <ToolButton $w={31}><MdVerticalAlignBottom /></ToolButton>
            <ToolCaret><MdArrowDropDown /></ToolCaret>
            <ToolButton $w={22}><MdWrapText /></ToolButton>
            <ToolCaret><MdArrowDropDown /></ToolCaret>
            <ToolButton $w={22}><MdTextRotationNone /></ToolButton>
            <ToolCaret><MdArrowDropDown /></ToolCaret>
            <ToolSep />
            <ToolButton><MdLink /></ToolButton>
            <ToolButton><MdOutlineAddComment /></ToolButton>
            <ToolButton><MdInsertChartOutlined /></ToolButton>
            <ToolButton><MdOutlineFilterAlt /></ToolButton>
            <ToolCaret><MdArrowDropDown /></ToolCaret>
            <ToolButton $w={26}><MdFunctions /></ToolButton>
            <Collapse><MdExpandLess /></Collapse>
          </Toolbar>
          <FormulaBar>
            <CellName>T6<MdArrowDropDown /></CellName>
            <FxSep />
            <FxMark>fx</FxMark>
          </FormulaBar>
          <SheetRow>
            <Sheet>
              <Corner />
              <ColumnStrip>
                {colNames.map((c) => (
                  <ColumnHead key={c} $active={c === "T"}>
                    {c}
                    {c === "P" && <FilterCaret>▼</FilterCaret>}
                  </ColumnHead>
                ))}
              </ColumnStrip>
              <RowStrip>
                {rowHeights.map((_, i) => (
                  <RowHead key={i} $active={i === 5}>{i + 1}</RowHead>
                ))}
              </RowStrip>

              <ClickCell href="#">Click<br />Here First</ClickCell>
              {kpis.map((k) => (
                <KpiCard key={k.label} $col={k.col} $tone={k.tone}>
                  <KpiHead $tone={k.tone}>{k.label}</KpiHead>
                  <KpiValue $tone={k.tone}>{k.value}</KpiValue>
                </KpiCard>
              ))}

              <FieldLabel $row={5}>Year</FieldLabel>
              <FieldValue $row={5}>Enter Year Here</FieldValue>
              <FieldLabel $row={6}>Month</FieldLabel>
              <FieldValue $row={6}>Select Month<FieldCaret>▼</FieldCaret></FieldValue>
              <Warning>DO NOT EDIT ANY FIELD THAT'S NOT <WarningBlue>BLUE</WarningBlue></Warning>
              <SelectedCell />

              <TableView col={2} row={8} title="Budget" edge="#e3e3e3" heads={["Utilization", "Projected", "Actual"]} rows={budgetRows} total={{ label: "TOTAL REMAINING", a: "25,229.00", b: "10,310.12" }} />
              <TableView col={2} row={18} title="Income" edge={TEAL_EDGE} heads={["Type", "Expected", "Actual"]} rows={incomeRows} total={{ label: "TOTAL", a: "7,328.00", b: "4,950.12" }} />
              <TableView col={2} row={30} title="Investments" edge={TEAL_EDGE} heads={["Type", "Target", "Actual"]} rows={investmentRows} total={{ label: "TOTAL", a: "5,510.00", b: "320.00" }} stripeTotal={false} />
              <TableView col={2} row={45} title="Savings" edge={TEAL_EDGE} heads={["Type", "Target", "Actual"]} rows={[]} />

              <TableView col={17} row={6} title="Debt" edge={PINK_EDGE} heads={["Type", "Expected", "Actual"]} rows={debtRows} total={{ label: "TOTAL REMAINING", a: "480.00", b: "200.00" }} />
              <TableView col={17} row={19} title="Expenses" edge={PINK_EDGE} heads={["Type", "Expected", "Actual"]} rows={expenseRows} total={{ label: "TOTAL", a: "10,184.00", b: "1,415.00" }} totalBTone="green" />
              <TableView col={17} row={40} title="Bills" edge={PINK_EDGE} heads={["Type", "Expected", "Actual"]} rows={billRows} />

              <IncomeChart />
              <DebtChart />
              <ExpensesChart />
              <MiniChart x={597} w={375} title="Savings Summary" first="Target" titleLeft={14} />
              <MiniChart x={978} w={356} title="Bills Summary" first="Expected" titleLeft={14} />
            </Sheet>
            <VerticalScroll>
              <VerticalThumb />
              <ScrollArrows><span>▲</span><span>▼</span></ScrollArrows>
            </VerticalScroll>
          </SheetRow>
          <HorizontalScroll>
            <HorizontalThumb />
            <ScrollEnds><span>◀</span><span>▶</span></ScrollEnds>
          </HorizontalScroll>
          <TabBar>
            <TabTool><MdAdd /></TabTool>
            <TabTool><MdMenu /></TabTool>
            <Tabs>
              {tabs.map(([t, w]) => (
                <Tab key={t} $w={w} $active={t === "Overview"}>
                  {t}
                  {t !== "Transactions Tracker" && <MdArrowDropDown />}
                </Tab>
              ))}
            </Tabs>
            <TabNav $dim $gap={10}><MdChevronLeft /></TabNav>
            <TabNav $gap={15}><MdChevronRight /></TabNav>
            <TabNav $gap={105}><ExploreIcon /></TabNav>
            <TabNav $gap={34}><MdChevronLeft /></TabNav>
          </TabBar>
        </Screen>
      </Frame>
    </Page>
  );
}
